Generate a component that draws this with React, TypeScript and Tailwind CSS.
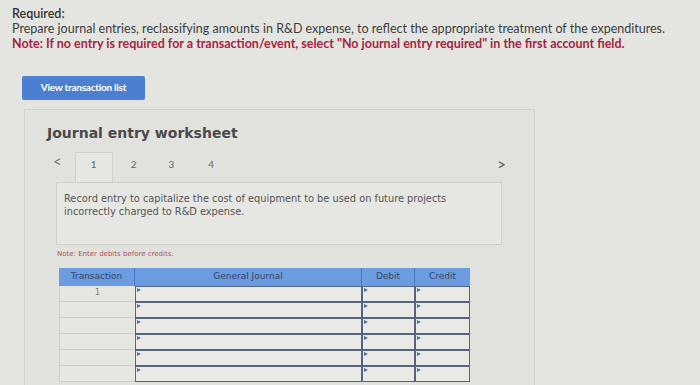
import { FC } from 'react'

const rows = [1, 2, 3, 4, 5, 6]

const InputCell: FC<{ w: string }> = ({ w }) => (
  <div className={`relative ${w} h-[16px] border-[1.5px] border-[#56657e] bg-[#e9eae6]`}>
    <span className="absolute left-[1px] top-[1px] w-0 h-0 border-y-[2.5px] border-y-transparent border-l-[4px] border-l-[#4b6fa8]" />
  </div>
)

export default function App() {
  return (
    <div
      className="w-[700px] h-[385px] overflow-hidden bg-[#e4e5e1] relative"
      style={{ fontFamily: 'Lato, "Open Sans", sans-serif' }}
    >
      <div className="pl-[12px] pt-[6px] text-[12.5px] leading-[15px] text-[#3d3d3d]">
        <div className="font-semibold text-[#333]">Required:</div>
        <div>
          Prepare journal entries, reclassifying amounts in R&amp;D expense, to reflect the appropriate treatment of the expenditures.
        </div>
        <div className="font-bold text-[#a3263f]">
          Note: If no entry is required for a transaction/event, select "No journal entry required" in the first account field.
        </div>
      </div>

      <div className="pl-[22px] pt-[22px]">
        <button className="w-[123px] h-[24px] rounded-[2px] bg-[#4b7fd0] text-white text-[10px] font-bold tracking-tight">
          View transaction list
        </button>
      </div>

      <div className="ml-[24px] mt-[9px] w-[511px] h-[300px] border border-[#d3d4d0] bg-[#e1e2de]">
        <div
          className="pl-[22px] pt-[13px] text-[14px] font-bold text-[#4a4a4a]"
          style={{ fontFamily: '"DejaVu Sans", Verdana, sans-serif' }}
        >
          Journal entry worksheet
        </div>

        <div className="flex items-start mt-[8px] pl-[28px] pr-[28px] h-[30px] text-[10px] text-[#666]">
          <span className="text-[#777] text-[15px] leading-none pt-[2px] mr-[13px]">&lt;</span>
          <div className="w-[38px] h-[30px] border border-b-0 border-[#cfd0cc] bg-[#e6e7e3] flex justify-center pt-[4px]">
            1
          </div>
          <div className="flex pt-[5px]">
            <span className="ml-[18px]">2</span>
            <span className="ml-[32px]">3</span>
            <span className="ml-[34px]">4</span>
          </div>
          <span className="ml-auto text-[#555] text-[15px] leading-none pt-[5px]">&gt;</span>
        </div>

        <div
          className="ml-[31px] w-[446px] h-[63px] border border-[#cfd0cc] bg-[#e6e7e3] px-[7px] pt-[9px] text-[9.8px] leading-[13px] text-[#555]"
          style={{ fontFamily: '"DejaVu Sans", Verdana, sans-serif' }}
        >
          Record entry to capitalize the cost of equipment to be used on future projects
          <br />
          incorrectly charged to R&amp;D expense.
        </div>

        <div
          className="ml-[32px] mt-[4px] text-[7px] text-[#b0505a]"
          style={{ fontFamily: '"DejaVu Sans", Verdana, sans-serif' }}
        >
          Note: Enter debits before credits.
        </div>

        <div className="ml-[34px] mt-[9px] w-[411px]" style={{ fontFamily: '"DejaVu Sans", Verdana, sans-serif' }}>
          <div className="flex h-[18px] bg-[#6b9be0] text-[9px] text-[#384663]">
            <div className="w-[76px] flex items-center justify-center border-r border-[#4f77b8]">Transaction</div>
            <div className="w-[227px] flex items-center justify-center border-r border-[#4f77b8]">General Journal</div>
            <div className="w-[53px] flex items-center justify-center border-r border-[#4f77b8]">Debit</div>
            <div className="w-[55px] flex items-center justify-center">Credit</div>
          </div>
          {rows.map((r) => (
            <div key={r} className="flex">
              <div className="w-[76px] h-[16px] border-b border-l border-[#cfd0cc] bg-[#e6e7e3] flex items-start justify-center text-[8px] text-[#777] pt-[1px]">
                {r === 1 ? '1' : ''}
              </div>
              <InputCell w="w-[227px]" />
              <InputCell w="w-[53px]" />
              <InputCell w="w-[55px]" />
            </div>
          ))}
        </div>
      </div>
    </div>
  )
}
